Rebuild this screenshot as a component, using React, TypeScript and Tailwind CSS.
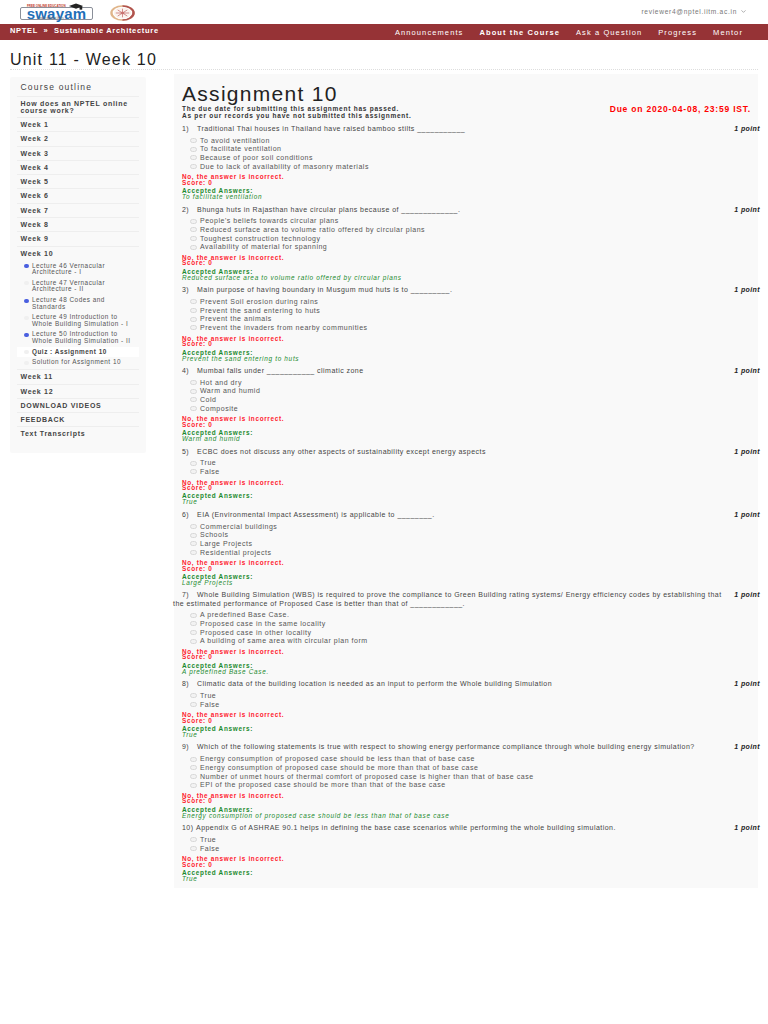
import { ChevronDown } from "lucide-react";

const weeksBefore = ["Week 1", "Week 2", "Week 3", "Week 4", "Week 5", "Week 6", "Week 7", "Week 8", "Week 9"];

const lectures = [
  { label: "Lecture 46 Vernacular Architecture - I", done: true },
  { label: "Lecture 47 Vernacular Architecture - II", done: false },
  { label: "Lecture 48 Codes and Standards", done: true },
  { label: "Lecture 49 Introduction to Whole Building Simulation - I", done: false },
  { label: "Lecture 50 Introduction to Whole Building Simulation - II", done: true },
  { label: "Quiz : Assignment 10", done: false, active: true },
  { label: "Solution for Assignment 10", done: false },
];

const weeksAfter = ["Week 11", "Week 12", "DOWNLOAD VIDEOS", "FEEDBACK", "Text Transcripts"];

const questions = [
  {
    q: "Traditional Thai houses in Thailand have raised bamboo stilts ___________",
    options: ["To avoid ventilation", "To facilitate ventilation", "Because of poor soil conditions", "Due to lack of availability of masonry materials"],
    answer: "To facilitate ventilation",
  },
  {
    q: "Bhunga huts in Rajasthan have circular plans because of _____________.",
    options: ["People's beliefs towards circular plans", "Reduced surface area to volume ratio offered by circular plans", "Toughest construction technology", "Availability of material for spanning"],
    answer: "Reduced surface area to volume ratio offered by circular plans",
  },
  {
    q: "Main purpose of having boundary in Musgum mud huts is to _________.",
    options: ["Prevent Soil erosion during rains", "Prevent the sand entering to huts", "Prevent the animals", "Prevent the invaders from nearby communities"],
    answer: "Prevent the sand entering to huts",
  },
  {
    q: "Mumbai falls under ___________ climatic zone",
    options: ["Hot and dry", "Warm and humid", "Cold", "Composite"],
    answer: "Warm and humid",
  },
  {
    q: "ECBC does not discuss any other aspects of sustainability except energy aspects",
    options: ["True", "False"],
    answer: "True",
  },
  {
    q: "EIA (Environmental Impact Assessment) is applicable to ________.",
    options: ["Commercial buildings", "Schools", "Large Projects", "Residential projects"],
    answer: "Large Projects",
  },
  {
    q: "Whole Building Simulation (WBS) is required to prove the compliance to Green Building rating systems/ Energy efficiency codes by establishing that the estimated performance of Proposed Case is better than that of ____________.",
    options: ["A predefined Base Case.", "Proposed case in the same locality", "Proposed case in other locality", "A building of same area with circular plan form"],
    answer: "A predefined Base Case.",
  },
  {
    q: "Climatic data of the building location is needed as an input to perform the Whole building Simulation",
    options: ["True", "False"],
    answer: "True",
  },
  {
    q: "Which of the following statements is true with respect to showing energy performance compliance through whole building energy simulation?",
    options: ["Energy consumption of proposed case should be less than that of base case", "Energy consumption of proposed case should be more than that of base case", "Number of unmet hours of thermal comfort of proposed case is higher than that of base case", "EPI of the proposed case should be more than that of the base case"],
    answer: "Energy consumption of proposed case should be less than that of base case",
  },
  {
    q: "Appendix G of ASHRAE 90.1 helps in defining the base case scenarios while performing the whole building simulation.",
    options: ["True", "False"],
    answer: "True",
  },
];

function SwayamLogo() {
  return (
    <div className="relative mt-[3px] h-[13px] w-[73px] rounded-[2px] border border-[#8a8f99] bg-white flex items-center justify-center">
      <span className="text-[15px] leading-[10px] font-bold text-[#1f6fb8] tracking-[0.2px]">swayam</span>
      <svg className="absolute left-[47px] top-[-5px]" width="16" height="8" viewBox="0 0 18 8">
        <path d="M1 3 L9 0 L17 3 L9 6 Z" fill="#222" />
        <rect x="13" y="3" width="3" height="4" fill="#222" />
      </svg>
      <span className="absolute left-[6px] top-[-3.5px] text-[3px] leading-none font-bold text-[#c0392b] whitespace-nowrap">FREE ONLINE EDUCATION</span>
      <span className="absolute left-[18px] top-[9px] text-[3px] leading-none text-[#666] whitespace-nowrap">learn without limits</span>
    </div>
  );
}

function RoundLogo() {
  return (
    <svg width="25" height="16" viewBox="0 0 26 26" preserveAspectRatio="none">
      <circle cx="13" cy="13" r="11.5" fill="none" stroke="#e0b58a" strokeWidth="2.5" />
      <path d="M13 1.5 A11.5 11.5 0 0 1 13 24.5" fill="none" stroke="#b0524f" strokeWidth="2.5" />
      <circle cx="13" cy="13" r="9" fill="#fbf3ee" />
      <g stroke="#c9726f" strokeWidth="1">
        <path d="M13 6 V20 M6 13 H20 M8 8 L18 18 M18 8 L8 18" />
      </g>
      <circle cx="13" cy="13" r="2" fill="#c9726f" />
    </svg>
  );
}

function Sidebar() {
  return (
    <aside className="w-[136px] h-[376px] shrink-0 rounded-[2px] bg-[#f9f9f9] px-[7px] mt-[3px]">
      <div className="h-[20px] pl-[3.5px] pt-[5px] text-[8.5px] leading-[10px] tracking-[1.2px] text-[#444] border-b border-[#eeeeee]">
        Course outline
      </div>
      <div className="pl-[3.5px] py-[2.5px] text-[7px] leading-[7.5px] tracking-[0.7px] font-bold text-[#444] border-b border-[#eeeeee]">
        How does an NPTEL online course work?
      </div>
      {weeksBefore.map((w) => (
        <div key={w} className="h-[14.3px] pl-[3.5px] text-[7px] leading-[14px] tracking-[0.7px] font-bold text-[#444] border-b border-[#eeeeee]">
          {w}
        </div>
      ))}
      <div className="pl-[3.5px] pt-[3px] pb-[3px] text-[7px] leading-[8px] tracking-[0.7px] font-bold text-[#444]">Week 10</div>
      <div className="border-b border-[#eeeeee] pb-[1.5px]">
        {lectures.map((l) => (
          <div key={l.label} className={`flex py-[2px] ${l.active ? "bg-white" : ""}`}>
            <span className="w-[15px] shrink-0 pl-[7px] pt-[1.5px]">
              <span className={`block h-[4px] w-[5px] rounded-full ${l.done ? "bg-[#4a5fe0]" : "bg-[#f0f0f0]"}`} />
            </span>
            <span className={`w-[101px] text-[6.4px] leading-[6.6px] tracking-[0.5px] ${l.active ? "font-bold text-[#444]" : "text-[#555]"}`}>{l.label}</span>
          </div>
        ))}
      </div>
      {weeksAfter.map((w) => (
        <div key={w} className="h-[14.3px] pl-[3.5px] text-[7px] leading-[14px] tracking-[0.7px] font-bold text-[#444] border-b border-[#eeeeee] last:border-b-0">
          {w}
        </div>
      ))}
    </aside>
  );
}

function Question({ n, q, options, answer }: { n: number; q: string; options: string[]; answer: string }) {
  return (
    <div className="ml-[-1px] pb-[5.4px]">
      <div className="relative pr-[25px] text-[7px] leading-[8.1px] tracking-[0.46px] text-[#444]">
        <span className={n === 10 ? "inline-block w-[14px] ml-[9px]" : "inline-block w-[15px] ml-[9px]"}>{n})</span>
        {q}
        <span className="absolute right-[-2px] top-0 text-[7px] italic font-bold tracking-[0.4px] text-[#222]">1 point</span>
      </div>
      <div className="mt-[3.6px] ml-[17px]">
        {options.map((o) => (
          <div key={o} className="flex items-center h-[8.7px] text-[7px] tracking-[0.52px] text-[#555]">
            <span className="shrink-0 w-[7px] h-[5px] rounded-full border border-[#d8d8d8] bg-[#f2f2f2] mr-[3px] mb-[1px]" />
            {o}
          </div>
        ))}
      </div>
      <div className="mt-[3px] ml-[9px] text-[6.4px] leading-[5.4px] tracking-[0.67px] font-bold text-[#ff1a2e]">
        <div>No, the answer is incorrect.</div>
        <div>Score: 0</div>
      </div>
      <div className="mt-[3px] ml-[9px] text-[6.4px] leading-[6px] tracking-[0.7px] text-[#1a8a2e]">
        <div className="font-bold">Accepted Answers:</div>
        <div className="italic">{answer}</div>
      </div>
    </div>
  );
}

export default function App() {
  return (
    <div className="min-h-[1024px] bg-white font-['Liberation_Sans',Arial,sans-serif]">
      <header className="flex h-[24px] items-center pl-[20px] pr-[21px]">
        <SwayamLogo />
        <div className="ml-[17px] mt-[2px]"><RoundLogo /></div>
        <div className="ml-auto flex items-center text-[6.6px] tracking-[0.7px] text-[#777]">
          reviewer4@nptel.iitm.ac.in
          <ChevronDown className="ml-[3px] h-[7px] w-[7px]" />
        </div>
      </header>
      <nav className="flex h-[16px] items-center bg-[#963336] pl-[10px] pr-[25px] text-[7.5px] text-white">
        <span className="font-bold tracking-[0.7px] mb-[2px]">NPTEL &nbsp;» &nbsp;Sustainable Architecture</span>
        <div className="ml-auto flex gap-[16px] tracking-[1.1px] mt-[2px]">
          <span>Announcements</span>
          <span className="font-bold">About the Course</span>
          <span>Ask a Question</span>
          <span>Progress</span>
          <span>Mentor</span>
        </div>
      </nav>
      <div className="mx-[10px] mt-[10px] h-[20px] border-b border-dotted border-[#ddd] text-[16px] leading-[20px] tracking-[1.2px] text-[#222]">
        Unit 11 - Week 10
      </div>
      <div className="flex mt-[4px] pl-[10px] pr-[10px] gap-[28px]">
        <Sidebar />
        <main className="w-[584px] h-[814px] bg-[#f9f9f9] pt-[8px]">
          <h1 className="ml-[8px] text-[21px] leading-[24px] tracking-[1.3px] text-[#222]">Assignment 10</h1>
          <div className="relative mt-[-1px] mb-[6px] ml-[8px] mr-[8px] text-[6.5px] leading-[7px] tracking-[0.75px] font-bold text-[#333]">
            <div>The due date for submitting this assignment has passed.</div>
            <div>As per our records you have not submitted this assignment.</div>
            <div className="absolute right-[-1px] top-0 text-[8.5px] leading-[8px] tracking-[0.8px] text-[#ff0000]">Due on 2020-04-08, 23:59 IST.</div>
          </div>
          {questions.map((q, i) => (
            <Question key={i} n={i + 1} q={q.q} options={q.options} answer={q.answer} />
          ))}
        </main>
      </div>
    </div>
  );
}
